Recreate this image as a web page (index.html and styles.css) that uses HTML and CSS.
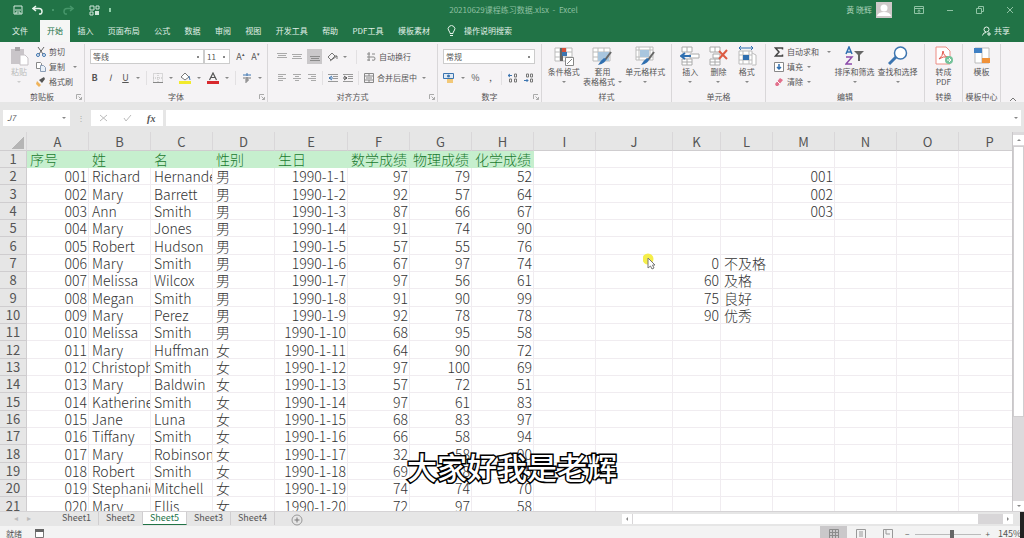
FILE: index.html
```html
<!DOCTYPE html>
<html lang="zh-CN">
  <head>
    <meta charset="utf-8">
    <title>20210629课程练习数据.xlsx - Excel</title>
    <link rel="stylesheet" href="styles.css">
  </head>
  <body>
    <header class="top">
      <div class="titlebar">
        <div class="quick">
          <button aria-label="保存"><svg width="10" height="10" viewBox="0 0 10 10"><path d="M1 1h8v8H1z" fill="none" stroke="#d5eadd"/><path d="M2 5h6M3 9V7h4v2" fill="none" stroke="#d5eadd"/></svg></button>
          <button aria-label="撤消"><svg width="11" height="10" viewBox="0 0 11 10"><path d="M4 1L1 3.500 4 6M1 3.500h6q3 0 3 3T7 9" fill="none" stroke="#e8f5ec" stroke-width="1.500"/></svg></button>
          <i class="dot"></i>
          <button class="redo" aria-label="恢复"><svg width="11" height="10" viewBox="0 0 11 10"><path d="M7 1l3 2.500L7 6M10 3.500H4q-3 0-3 3T4 9" fill="none" stroke="#46966a" stroke-width="1.500"/></svg></button>
          <button class="touch" aria-label="触摸模式"><svg width="11" height="11" viewBox="0 0 11 11"><path d="M1 1h4v4H1zM7 1h3v3H7zM1 7h3v3H1z" fill="none" stroke="#cfe6d8"/><path d="M6 6h4v4H6z" fill="#cfe6d8"/></svg></button>
          <i class="dot bright"></i>
        </div>
        <h1>20210629课程练习数据.xlsx&nbsp; -&nbsp; Excel</h1>
        <div class="account">
          <span class="user">黄 晓辉</span>
          <svg class="avatar" width="16" height="16" viewBox="0 0 16 16"><path d="M0 0h16v16H0z" fill="#cfc9c9"/><circle cx="8" cy="6" r="3.500" fill="#fff"/><path d="M1 14q1-4 7-4t7 4z" fill="#fff"/></svg>
          <button aria-label="功能区显示选项"><svg width="10" height="8" viewBox="0 0 10 8"><path d="M.5.500h9v7h-9zM.5 2.500h9M5 7V4M3.500 5.200L5 3.800l1.500 1.400" fill="none" stroke="#8fc3a4"/></svg></button>
          <button aria-label="最小化"><svg width="8" height="8" viewBox="0 0 8 8"><path d="M1 4.500h6" stroke="#8fc3a4"/></svg></button>
          <button aria-label="还原"><svg width="8" height="8" viewBox="0 0 8 8"><path d="M.5 2.500h5v5h-5zM2.500 2V.500h5v5H6" fill="none" stroke="#8fc3a4"/></svg></button>
          <button aria-label="关闭"><svg width="8" height="8" viewBox="0 0 8 8"><path d="M1 1l6 6M7 1L1 7" stroke="#8fc3a4"/></svg></button>
        </div>
      </div>
      <nav class="tabs">
        <button class="file">文件</button>
        <div class="tab-list">
          <button class="active">开始</button>
          <button>插入</button>
          <button>页面布局</button>
          <button>公式</button>
          <button>数据</button>
          <button>审阅</button>
          <button>视图</button>
          <button>开发工具</button>
          <button>帮助</button>
          <button>PDF工具</button>
          <button>模板素材</button>
        </div>
        <button class="tell"><svg width="9" height="12" viewBox="0 0 9 12"><path d="M3 8.500Q3 7 2 6a3.300 3.300 0 1 1 5 0Q6 7 6 8.500zM3 10.500h3" fill="none" stroke="#e8f5ec"/></svg>操作说明搜索</button>
        <button class="share"><svg width="9" height="10" viewBox="0 0 9 10"><circle cx="4.500" cy="3.500" r="2.500" fill="none" stroke="#e8f5ec"/><path d="M.5 9.500Q1 6.500 4 6.500M5 8h4M7 6v4" fill="none" stroke="#e8f5ec"/></svg>共享</button>
      </nav>
    </header>

    <section class="ribbon">
      <div class="group clipboard">
        <div class="body">
          <button class="big paste"><svg width="20" height="20" viewBox="0 0 20 20"><path d="M2 3h13v15H2z" fill="#c9c5c9"/><path d="M6 1h5v4H6z" fill="#aaa6aa"/><path d="M11 9h5l3 3v7h-8z" fill="#fff" stroke="#c5c1c5"/></svg><span>粘贴</span><i class="caret"></i></button>
          <div class="lines">
            <button><svg width="10" height="10" viewBox="0 0 10 10"><path d="M2 0l5 7M8 0L3 7" stroke="#666" fill="none"/><circle cx="2" cy="8" r="1.500" fill="none" stroke="#3c75b0"/><circle cx="8" cy="8" r="1.500" fill="none" stroke="#3c75b0"/></svg>剪切</button>
            <button><svg width="10" height="10" viewBox="0 0 10 10"><path d="M.5.500h4l1 1v5h-5z" fill="#fff" stroke="#888"/><path d="M4.500 3.500h3l2 2v4h-5z" fill="#e9f0f8" stroke="#8a9db5"/></svg>复制<i class="caret wide"></i></button>
            <button><svg width="10" height="10" viewBox="0 0 10 10"><path d="M1 4l4 4-2 2-3-3z" fill="#f0b35a"/><path d="M3 3l3 3 3-4-1-2z" fill="#555"/></svg>格式刷</button>
          </div>
        </div>
        <footer>剪贴板<svg class="launch" width="6" height="6" viewBox="0 0 6 6"><path d="M.5 5V.500H5M2.500 2.500l3 3M5.500 3v2.500H3" fill="none" stroke="#aaa"/></svg></footer>
      </div>

      <div class="group font">
        <div class="body rows">
          <div class="row">
            <select class="face" aria-label="字体"><option>等线</option></select>
            <select class="size" aria-label="字号"><option>11</option></select>
            <button class="letter">A<sup>▴</sup></button>
            <button class="letter">A<sup>▾</sup></button>
          </div>
          <div class="row format">
            <button class="letter"><b>B</b></button>
            <button class="letter"><em>I</em></button>
            <button class="letter"><u>U</u></button>
            <i class="caret"></i><i class="rule"></i>
            <button aria-label="边框"><svg width="10" height="10" viewBox="0 0 10 10"><path d="M.5.500h9v9h-9zM5 0v10M0 5h10" fill="none" stroke="#bbb" stroke-dasharray="1 1"/><path d="M0 9.500h10" stroke="#888"/></svg></button>
            <i class="caret"></i>
            <button aria-label="填充颜色"><svg width="12" height="12" viewBox="0 0 12 12"><path d="M2 5l4-4 4 4-4 3z" fill="#fff" stroke="#777"/><path d="M10 4l1 4" stroke="#3c75b0"/><path d="M0 9h12v3H0z" fill="#f2ea2c"/></svg></button>
            <i class="caret"></i>
            <button aria-label="字体颜色"><svg width="12" height="12" viewBox="0 0 12 12"><path d="M2.500 8L6 1l3.500 7M4 5.500h4" fill="none" stroke="#555" stroke-width="1.200"/><path d="M0 9h12v3H0z" fill="#d8282d"/></svg></button>
            <i class="caret"></i><i class="rule"></i>
            <button aria-label="拼音"><svg width="10" height="10" viewBox="0 0 10 10"><path d="M1 2h8M5 0v3" stroke="#3c75b0"/><path d="M1 5h8M5 4v5H3M3 7h4" fill="none" stroke="#777"/></svg></button>
            <i class="caret"></i>
          </div>
        </div>
        <footer>字体<svg class="launch" width="6" height="6" viewBox="0 0 6 6"><path d="M.5 5V.500H5M2.500 2.500l3 3M5.500 3v2.500H3" fill="none" stroke="#aaa"/></svg></footer>
      </div>

      <div class="group align">
        <div class="body rows">
          <div class="row">
            <button aria-label="顶端对齐"><svg width="10" height="10" viewBox="0 0 10 10"><path d="M0 1.500h10M1 3.500h8M0 5.500h10" stroke="#aaa"/></svg></button>
            <button aria-label="垂直居中"><svg width="10" height="10" viewBox="0 0 10 10"><path d="M0 2.500h10M1 4.500h8M0 6.500h10" stroke="#aaa"/></svg></button>
            <button class="pressed" aria-label="底端对齐"><svg width="10" height="10" viewBox="0 0 10 10"><path d="M0 4.500h10M1 6.500h8M0 8.500h10" stroke="#8b8b8b"/></svg></button>
            <button aria-label="方向"><svg width="11" height="10" viewBox="0 0 11 10"><path d="M1 5l4-4 3 3-4 4zM3 9l7-5M10 7V4H7" fill="none" stroke="#777"/></svg></button>
            <i class="caret"></i><i class="rule"></i>
            <button class="wrap"><svg width="10" height="10" viewBox="0 0 10 10"><path d="M1 2h3M6 2h3M1 5h7q1 0 1 2t-3 1M1 8h3M3 0v9" fill="none" stroke="#888"/></svg>自动换行</button>
          </div>
          <div class="row">
            <button aria-label="左对齐"><svg width="10" height="10" viewBox="0 0 10 10"><path d="M1 1.500h8M1 3.500h5M1 5.500h8M1 7.500h5" stroke="#aaa"/></svg></button>
            <button aria-label="居中"><svg width="10" height="10" viewBox="0 0 10 10"><path d="M1 1.500h8M3 3.500h4M1 5.500h8M3 7.500h4" stroke="#aaa"/></svg></button>
            <button aria-label="右对齐"><svg width="10" height="10" viewBox="0 0 10 10"><path d="M1 1.500h8M4 3.500h5M1 5.500h8M4 7.500h5" stroke="#aaa"/></svg></button>
            <i class="rule tight"></i>
            <button aria-label="减少缩进量"><svg width="10" height="10" viewBox="0 0 10 10"><path d="M0 1.500h10M5 3.500h5M5 5.500h5M0 8.500h10" stroke="#999"/><path d="M4 3L1 5l3 2M1 5h4" fill="none" stroke="#3c75b0"/></svg></button>
            <button aria-label="增加缩进量"><svg width="10" height="10" viewBox="0 0 10 10"><path d="M0 1.500h10M5 3.500h5M5 5.500h5M0 8.500h10" stroke="#999"/><path d="M1 3l3 2-3 2M0 5h4" fill="none" stroke="#555"/></svg></button>
            <i class="rule tight"></i>
            <button class="wrap"><svg width="10" height="10" viewBox="0 0 10 10"><path d="M.5.500h9v9h-9zM0 3h10M0 7h10M5 0v3M5 7v3M2 5h6" fill="none" stroke="#888"/></svg>合并后居中</button>
            <i class="caret"></i>
          </div>
        </div>
        <footer>对齐方式<svg class="launch" width="6" height="6" viewBox="0 0 6 6"><path d="M.5 5V.500H5M2.500 2.500l3 3M5.500 3v2.500H3" fill="none" stroke="#aaa"/></svg></footer>
      </div>

      <div class="group number">
        <div class="body rows">
          <div class="row"><select class="style" aria-label="数字格式"><option>常规</option></select></div>
          <div class="row">
            <button aria-label="会计数字格式"><svg width="12" height="10" viewBox="0 0 12 10"><path d="M.5.500h10v5H.5z" fill="#dfeaf5" stroke="#3c75b0"/><circle cx="5.500" cy="3" r="1.500" fill="#3c75b0"/><path d="M4 6h6v4H4z" fill="#f2c878"/></svg></button>
            <i class="caret"></i>
            <button class="letter">%</button>
            <button class="letter">,</button>
            <i class="rule tight"></i>
            <button aria-label="增加小数位数"><svg width="10" height="10" viewBox="0 0 10 10"><path d="M4 2.500H0M2 1L0 2.500 2 4" fill="none" stroke="#3c75b0"/><path d="M6.500 1h2v3h-2zM1.500 6h2v3h-2zM6.500 6h2v3h-2z" fill="none" stroke="#777"/></svg></button>
            <button aria-label="减少小数位数"><svg width="10" height="10" viewBox="0 0 10 10"><path d="M0 7.500h4M2.500 6L4 7.500 2.500 9" fill="none" stroke="#3c75b0"/><path d="M2.500 1h2v3h-2zM6.500 1h2v3h-2zM6.500 6h2v3h-2z" fill="none" stroke="#777"/></svg></button>
          </div>
        </div>
        <footer>数字<svg class="launch" width="6" height="6" viewBox="0 0 6 6"><path d="M.5 5V.500H5M2.500 2.500l3 3M5.500 3v2.500H3" fill="none" stroke="#aaa"/></svg></footer>
      </div>

      <div class="group styles">
        <div class="body">
          <button class="big"><svg width="20" height="20" viewBox="0 0 20 20"><path d="M1 2h17v13H1zM1 6h17M1 11h17M6 2v13M12 2v13" fill="#fff" stroke="#bbb"/><path d="M6 2h3v13H6z" fill="#666"/><path d="M8 2h4v4H8z" fill="#d8503a"/><path d="M8 6h5v4H8z" fill="#3c75b0"/><path d="M11.500 11.500h8v8h-8zM13 18l5-5" fill="#fff" stroke="#888"/></svg><span>条件格式</span><i class="caret"></i></button>
          <button class="big"><svg width="20" height="20" viewBox="0 0 20 20"><path d="M1 2h17v13H1zM1 6h17M1 11h17M6 2v13M12 2v13" fill="#fff" stroke="#bbb"/><path d="M6 6h11v9H6z" fill="#a9c6de"/><path d="M19 6l-6 8" stroke="#666" stroke-width="2"/><path d="M14 13q0 4-8 6 3-5 6-7z" fill="#2f6fb0"/></svg><span>套用<br>表格格式<i class="caret"></i></span></button>
          <button class="big"><svg width="20" height="20" viewBox="0 0 20 20"><path d="M1 1h17v13H1zM4 1v13M15 1v13M1 4h17M1 11h17" fill="#fff" stroke="#bbb"/><path d="M5 4h9v7H5z" fill="#a9c6de"/><path d="M19 6l-6 8" stroke="#666" stroke-width="2"/><path d="M14 13q0 4-8 6 3-5 6-7z" fill="#2f6fb0"/></svg><span>单元格样式</span><i class="caret"></i></button>
        </div>
        <footer>样式</footer>
      </div>

      <div class="group cells">
        <div class="body">
          <button class="big"><svg width="20" height="20" viewBox="0 0 20 20"><path d="M2 1h10v5H2zM7 1v5M2 13h10v6H2zM7 13v6M2 16h10M10 8h9v4h-9z" fill="#fff" stroke="#aaa"/><path d="M11 10H2M5 7l-4 3 4 3" fill="none" stroke="#2f6fb0" stroke-width="2"/></svg><span>插入</span><i class="caret"></i></button>
          <button class="big"><svg width="20" height="20" viewBox="0 0 20 20"><path d="M2 1h10v5H2zM7 1v5M2 13h10v6H2zM7 13v6M2 16h10M5 8h7v4H5z" fill="#fff" stroke="#aaa"/><path d="M11 5l8 8M19 4l-8 9" stroke="#dc5b43" stroke-width="2"/></svg><span>删除</span><i class="caret"></i></button>
          <button class="big"><svg width="20" height="20" viewBox="0 0 20 20"><path d="M2 5h13v13H2zM2 9h13M2 14h13M6 5v13M12 5v13M15 7l4 2v10h-4" fill="#fff" stroke="#bbb"/><path d="M6 9h6v5H6z" fill="#2f6fb0"/><path d="M2 2h14M4 0L2 2l2 2M14 0l2 2-2 2" fill="none" stroke="#2f6fb0"/></svg><span>格式</span><i class="caret"></i></button>
        </div>
        <footer>单元格</footer>
      </div>

      <div class="group edit">
        <div class="body">
          <div class="lines">
            <button><svg width="10" height="10" viewBox="0 0 10 10"><path d="M8.500 2.500V1H1.500L5 5 1.500 9h7V7.500" fill="none" stroke="#444" stroke-width="1.500"/></svg>自动求和<i class="caret wide"></i></button>
            <button><svg width="10" height="10" viewBox="0 0 10 10"><path d="M.5.500h9v9h-9z" fill="#fff" stroke="#888"/><path d="M5 2v5M3 5l2 2 2-2" fill="none" stroke="#2f6fb0" stroke-width="1.500"/></svg>填充<i class="caret"></i></button>
            <button><svg width="10" height="10" viewBox="0 0 10 10"><path d="M1 7l5-6 3 2-5 6H2z" fill="#e2708c"/><path d="M3 4l3 3" stroke="#fff"/></svg>清除<i class="caret"></i></button>
          </div>
          <button class="big"><svg width="20" height="20" viewBox="0 0 20 20"><path d="M1 8l3-7 3 7M2 6h4" fill="none" stroke="#2f6fb0" stroke-width="1.500"/><path d="M1 11h6l-6 7h6" fill="none" stroke="#8d4bab" stroke-width="1.500"/><path d="M9 5h10l-4 4v6h-2V9z" fill="#666"/></svg><span>排序和筛选</span><i class="caret"></i></button>
          <button class="big"><svg width="20" height="20" viewBox="0 0 20 20"><circle cx="12.500" cy="7" r="6" fill="#fff" stroke="#3c75b0" stroke-width="1.500"/><path d="M8 11l-7 7" stroke="#3c75b0" stroke-width="3"/></svg><span>查找和选择</span><i class="caret"></i></button>
        </div>
        <footer>编辑</footer>
      </div>

      <div class="group pdf">
        <div class="body">
          <button class="big"><svg width="20" height="20" viewBox="0 0 20 20"><path d="M2 1h10l4 4v13H2z" fill="#fff" stroke="#ec8d84"/><path d="M5 13q4-3 4-8 1 6 5 6-5-1-9 2z" fill="none" stroke="#e3564a"/><circle cx="15" cy="14" r="4" fill="#74c29a"/><path d="M13 14h4M15 12l2 2-2 2" fill="none" stroke="#fff"/></svg><span>转成<br>PDF</span></button>
        </div>
        <footer>转换</footer>
      </div>

      <div class="group template">
        <div class="body">
          <button class="big"><svg width="20" height="20" viewBox="0 0 20 20"><path d="M3 2h14v15H3zM10 2v15" fill="#fff" stroke="#bbb"/><path d="M2 2h8v5H2z" fill="#3f80c4"/><path d="M10 12h8v5h-8z" fill="#f0923a"/></svg><span>模板</span></button>
        </div>
        <footer>模板中心</footer>
      </div>
      <button class="collapse" aria-label="折叠功能区"><svg width="8" height="6" viewBox="0 0 8 6"><path d="M1 5l3-3 3 3" fill="none" stroke="#777"/></svg></button>
    </section>

    <section class="formula">
      <div class="namebox"><input type="text" value="J7" aria-label="名称框"><i class="caret"></i></div>
      <span class="grip">⋮</span>
      <div class="entry">
        <button aria-label="取消"><svg width="9" height="8" viewBox="0 0 9 8"><path d="M1 1l7 6M8 1L1 7" stroke="#bbb"/></svg></button>
        <button aria-label="输入"><svg width="9" height="8" viewBox="0 0 9 8"><path d="M1 4l2 3 5-6" fill="none" stroke="#bbb"/></svg></button>
        <button class="fx">fx</button>
      </div>
      <div class="field"><input type="text" aria-label="编辑栏"><i class="caret"></i></div>
    </section>

    <main class="sheet">
      <div class="grid">
        <table>
          <colgroup>
            <col class="w-head"><col class="w-n"><col class="w-n"><col class="w-n"><col class="w-n"><col class="w-e"><col class="w-n"><col class="w-n"><col class="w-n"><col class="w-n"><col class="w-j"><col class="w-k"><col class="w-l"><col class="w-n"><col class="w-n"><col class="w-n"><col class="w-n">
          </colgroup>
          <thead><tr id="letters"></tr></thead>
          <tbody id="cells"></tbody>
        </table>
      </div>
      <div class="vscroll">
        <button aria-label="向上"><i class="up"></i></button>
        <div class="thumb"></div>
        <button aria-label="向下"><i class="caret"></i></button>
      </div>
      <svg class="pointer" width="16" height="18" viewBox="0 0 16 18"><circle cx="5" cy="6" r="5.500" fill="#f5ee4a"/><path d="M5 5v10l2.500-2L9 16l2-1-1.500-3H12z" fill="#fff" stroke="#777"/></svg>
    </main>

    <div class="sheetbar">
      <div class="arrows"><span>◂</span><span>▸</span></div>
      <button>Sheet1</button>
      <button>Sheet2</button>
      <button class="active">Sheet5</button>
      <button>Sheet3</button>
      <button>Sheet4</button>
      <button class="add" aria-label="新工作表"><svg width="12" height="12" viewBox="0 0 12 12"><circle cx="6" cy="6" r="5" fill="none" stroke="#999"/><path d="M3.500 6h5M6 3.500v5" stroke="#777"/></svg></button>
      <div class="hscroll">
        <button aria-label="向左"><i class="left"></i></button>
        <div class="thumb"></div>
        <button aria-label="向右"><i class="right"></i></button>
      </div>
      <div class="edge"></div>
    </div>

    <footer class="status">
      <span>就绪</span>
      <svg class="macro" width="9" height="9" viewBox="0 0 9 9"><path d="M.5.500h8v8h-8z" fill="#fff" stroke="#777"/><path d="M0 0h9v3H0z" fill="#666"/></svg>
      <div class="views">
        <button class="pressed" aria-label="普通"><svg width="10" height="10" viewBox="0 0 10 10"><path d="M.5.500h9v9h-9zM0 3.500h10M0 6.500h10M3.500 0v10M6.500 0v10" fill="none" stroke="#8c8c8c"/></svg></button>
        <button aria-label="页面布局"><svg width="10" height="10" viewBox="0 0 10 10"><path d="M.5.500h9v9h-9zM3 3h4M3 5h4M3 7h4" fill="none" stroke="#999"/></svg></button>
        <button aria-label="分页预览"><svg width="10" height="10" viewBox="0 0 10 10"><path d="M.5.500h9v9h-9zM3 0v5h4" fill="none" stroke="#999"/></svg></button>
      </div>
      <div class="zoom">
        <span>−</span><input type="range" min="0" max="100" value="57" aria-label="显示比例"><span>+</span>
      </div>
      <span class="percent">145%</span>
      <div class="edge"></div>
    </footer>

    <p class="caption">大家好我是老辉</p>
    <script src="script.js"></script>
  </body>
</html>
```

FILE: styles.css
```css
* {
    box-sizing: border-box;
}

body {
    margin: 0;
    height: 100vh;
    display: flex;
    flex-direction: column;
    overflow: hidden;
    position: relative;
    background: #fff;
    color: #555;
    font-family: "Noto Sans CJK SC", sans-serif;
    font-size: 8px;
    line-height: 12px;
}

button, input, select {
    font: inherit;
    color: inherit;
    margin: 0;
    padding: 0;
    border: 0;
    background: none;
    appearance: none;
    outline: 0;
}
button {
    display: flex;
    align-items: center;
    justify-content: center;
    white-space: nowrap;
}
svg {
    flex: none;
    display: block;
}
.caret, .up, .left, .right {
    flex: none;
    display: inline-block;
    border: 2px solid transparent;
    border-top-color: #888;
    border-bottom: 0;
}
.up {
    transform: rotate(180deg);
}
.left {
    transform: rotate(90deg);
}
.right {
    transform: rotate(-90deg);
}

/* title bar and tabs */
.top {
    flex: none;
    background: #217346;
    color: #e2f1e8;
}
.titlebar {
    display: flex;
    align-items: center;
    height: 20px;
}
.quick, .account {
    flex: 1;
    display: flex;
    align-items: center;
}
.quick {
    padding-left: 13px;
    gap: 9px;
}
.dot {
    width: 2px;
    height: 2px;
    background: #46966a;
}
.dot.bright {
    height: 4px;
    background: #8ed0a8;
}
.touch {
    margin-left: 6px;
}
h1 {
    margin: 0;
    font-size: 8px;
    font-weight: normal;
    color: #8fc0a2;
}
.account {
    justify-content: flex-end;
    padding-right: 10px;
    gap: 22px;
}
.user {
    color: #a5cfb5;
    margin-right: -18px;
}
.tabs {
    display: flex;
    height: 22px;
}
.tabs button {
    padding: 0 7px;
}
.tabs .file {
    width: 40px;
}
.tab-list {
    flex: 0 0 397px;
    display: flex;
    justify-content: space-between;
}
.tabs .active {
    background: #f5f6f5;
    color: #217346;
}
.tabs .tell {
    gap: 8px;
    padding: 0 10px;
}
.tabs .share {
    gap: 3px;
    margin-left: auto;
    padding-right: 14px;
}

/* ribbon */
.ribbon {
    flex: none;
    display: flex;
    height: 60px;
    padding-top: 2px;
    background: #f5f3f5;
}
.group {
    flex: none;
    display: flex;
    flex-direction: column;
    border-right: 1px solid #d9d7d9;
}
.group .body {
    display: flex;
    height: 47px;
}
.group footer {
    position: relative;
    text-align: center;
    line-height: 11px;
}
.launch {
    position: absolute;
    right: 2px;
    top: 3px;
}
.clipboard { width: 85px; }
.font { width: 183px; }
.align { width: 170px; }
.number { width: 104px; }
.styles { width: 130px; }
.cells { width: 94px; }
.edit { width: 159px; }
.pdf { width: 38px; }
.template { width: 38px; }

.big {
    flex-direction: column;
    justify-content: flex-start;
    padding-top: 2px;
    line-height: 10px;
    text-align: center;
}
.big span {
    margin-top: 1px;
}
.big > .caret {
    margin-top: 4px;
}
.big span .caret {
    margin-left: 3px;
    margin-bottom: 2px;
}
.paste {
    width: 34px;
    margin-left: 2px;
    color: #bbb;
}
.paste .caret {
    border-top-color: #ccc;
}
.lines {
    display: flex;
    flex-direction: column;
    align-items: flex-start;
}
.lines button {
    height: 15px;
    gap: 3px;
}
.lines .caret {
    margin-left: 1px;
}
.lines .wide {
    margin-left: 5px;
}
.styles .body, .cells .body {
    justify-content: space-around;
    padding: 0 4px;
}
.edit .body {
    padding-left: 8px;
}
.edit .lines {
    width: 59px;
}
.edit .big {
    width: 43px;
}
.pdf .body, .template .body {
    justify-content: center;
}

.rows {
    flex-direction: column;
    padding: 4px 5px 0;
    gap: 4px;
}
.row {
    display: flex;
    align-items: center;
    height: 17px;
    gap: 6px;
}
.rule {
    width: 1px;
    height: 14px;
    margin: 0 4px;
    background: #e2e0e2;
}
.rule.tight {
    margin: 0;
}
.ribbon select {
    height: 15px;
    padding-left: 2px;
    border: 1px solid #ccc;
    background: #fff linear-gradient(#888, #888) no-repeat right 4px center / 2px 2px;
}
.face {
    width: 114px;
}
.size {
    width: 26px;
    margin-left: -6px;
}
.style {
    width: 92px;
}
.letter {
    font-size: 9px;
    color: #555;
    min-width: 9px;
}
.letter sup {
    font-size: 5px;
    line-height: 6px;
    align-self: flex-start;
}
.font .format {
    gap: 6px;
}
.format .letter {
    width: 10px;
}
.format .rule {
    margin: 0;
}
.align .row {
    gap: 5px;
}
.align .body {
    padding-left: 9px;
}
.pressed {
    width: 15px;
    height: 15px;
}
.pressed {
    background: #cac8ca;
}
.wrap {
    gap: 3px;
}
.collapse {
    margin: 0 auto;
    align-self: flex-end;
}

/* formula bar */
.formula {
    flex: none;
    display: flex;
    align-items: center;
    height: 30px;
    padding: 2px 3px 0;
    background: #e6e6e6;
}
.namebox, .entry, .field {
    display: flex;
    align-items: center;
    height: 16px;
    background: #fff;
}
.namebox {
    width: 67px;
    padding: 0 4px 0 2px;
}
.namebox input {
    width: 57px;
    padding-left: 2px;
    font-style: italic;
}
.grip {
    width: 21px;
    text-align: center;
    color: #aaa;
}
.entry {
    width: 72px;
    justify-content: space-around;
}
.fx {
    font: italic bold 10px "Liberation Serif", serif;
}
.field {
    flex: 1;
    margin-left: 3px;
    padding-right: 3px;
}
.field input {
    flex: 1;
}

/* worksheet */
.sheet {
    flex: 1;
    min-height: 0;
    display: flex;
    position: relative;
}
.grid {
    flex: 1;
    min-width: 0;
    overflow: hidden;
    border-right: 1px solid #c9c7c9;
}
table {
    table-layout: fixed;
    width: 1021px;
    border-spacing: 0;
    font-size: 14px;
    font-weight: 300;
    line-height: 16px;
    color: #333;
}
.w-head { width: 27px; }
.w-n { width: 62px; }
.w-e { width: 73px; }
.w-j { width: 77px; }
.w-k { width: 48px; }
.w-l { width: 52px; }

th, td {
    padding: 0 1px 0 3px;
    border: solid #f0ecf0;
    border-width: 0 1px 1px 0;
    white-space: nowrap;
    text-align: left;
    font-weight: inherit;
}
/* long names stop at the cell edge, descenders may cross the line below */
td {
    overflow-x: clip;
    overflow-y: visible;
}
th {
    padding: 0 1px;
    background: #e6e6e6;
    border-color: #cfcdcf;
    font-size: 13px;
    font-weight: 400;
    text-align: center;
    color: #555;
}
thead tr {
    height: 19px;
}
thead th {
    border-right-color: #d9d7d9;
    vertical-align: bottom;
}
thead th:first-child {
    background: linear-gradient(135deg, transparent 50%, #b5b5b5 50%) no-repeat 12px 5px / 12px 12px #e6e6e6;
}
tbody tr {
    height: 17px;
}
tbody tr:nth-child(3n) {
    height: 18px;
}
td.num {
    text-align: right;
}
td.title {
    background: #c6efce;
    border-color: #c6efce;
    color: #1a7a2e;
}
.pointer {
    position: absolute;
    left: 643px;
    top: 121px;
}
.vscroll {
    flex: none;
    display: flex;
    flex-direction: column;
    width: 11px;
    padding-top: 3px;
    background: #dcdadc;
}
.vscroll button {
    height: 10px;
    background: #fff;
}
.vscroll button:last-child {
    margin-top: auto;
}
.vscroll .thumb {
    height: 72%;
    margin-top: 1px;
    background: #fff;
    border: 1px solid #d0ced0;
}

/* sheet tabs */
.sheetbar {
    flex: none;
    display: flex;
    height: 15px;
    background: #e6e6e6;
    border-top: 1px solid #d5d3d5;
}
.arrows {
    width: 55px;
    padding-left: 14px;
    display: flex;
    gap: 9px;
    color: #bbb;
}
.sheetbar > button {
    width: 44px;
    height: 13px;
    padding-bottom: 2px;
    font-size: 9px;
    border-right: 1px solid #d0ced0;
}
.sheetbar > .active {
    background: #fff;
    color: #217346;
    border-bottom: 1px solid #217346;
    padding-bottom: 1px;
}
.sheetbar > .add {
    padding: 2px 0 0;
    border: 0;
}
.hscroll {
    flex: 0 0 391px;
    display: flex;
    margin: 2px 7px 0 auto;
    height: 10px;
    background: #d8d6d8;
}
.hscroll button {
    width: 10px;
    background: #fff;
}
.hscroll .thumb {
    flex: 1;
    margin: 0 25px 0 1px;
    background: #fff;
}
.edge {
    width: 4px;
    background: #222;
}

/* status bar */
.status {
    flex: none;
    display: flex;
    height: 12px;
    padding-left: 6px;
    overflow: hidden;
    background: #f3f3f3;
    line-height: 16px;
}
.macro {
    margin: 3px 0 0 13px;
}
.views {
    display: flex;
    margin-left: auto;
    gap: 17px;
}
.views button {
    height: 16px;
}
.views .pressed {
    width: 27px;
    margin: 0 -8px 0 0;
}
.zoom {
    display: flex;
    gap: 5px;
    margin: 0 8px 0 12px;
}
.zoom input {
    width: 66px;
    height: 16px;
    background: linear-gradient(#bbb, #bbb) no-repeat center / 100% 1px;
}
.zoom input::-webkit-slider-thumb {
    appearance: none;
    width: 4px;
    height: 9px;
    background: #666;
}
.percent {
    width: 22px;
    font-size: 9px;
}

.caption {
    position: absolute;
    left: 0;
    right: 0;
    bottom: 50px;
    margin: 0;
    text-align: center;
    font-size: 30px;
    line-height: 44px;
    font-weight: 500;
    color: #fff;
    -webkit-text-stroke: 3px #000;
    paint-order: stroke fill;
    pointer-events: none;
}
```

FILE: script.js
```js
const letters = 'ABCDEFGHIJKLMNOP';
const titles = ['序号', '姓', '名', '性别', '生日', '数学成绩', '物理成绩', '化学成绩'];
const people = [
  ['Richard', 'Hernandez', '男', 97, 79, 52],
  ['Mary', 'Barrett', '男', 92, 57, 64],
  ['Ann', 'Smith', '男', 87, 66, 67],
  ['Mary', 'Jones', '男', 91, 74, 90],
  ['Robert', 'Hudson', '男', 57, 55, 76],
  ['Mary', 'Smith', '男', 67, 97, 74],
  ['Melissa', 'Wilcox', '男', 97, 56, 61],
  ['Megan', 'Smith', '男', 91, 90, 99],
  ['Mary', 'Perez', '男', 92, 78, 78],
  ['Melissa', 'Smith', '男', 68, 95, 58],
  ['Mary', 'Huffman', '女', 64, 90, 72],
  ['Christopher', 'Smith', '女', 97, 100, 69],
  ['Mary', 'Baldwin', '女', 57, 72, 51],
  ['Katherine', 'Smith', '女', 97, 61, 83],
  ['Jane', 'Luna', '女', 68, 83, 97],
  ['Tiffany', 'Smith', '女', 66, 58, 94],
  ['Mary', 'Robinson', '女', 32, 58, 90],
  ['Robert', 'Smith', '女', 69, 78, 75],
  ['Stephanie', 'Mitchell', '女', 74, 74, 70],
  ['Mary', 'Ellis', '女', 72, 97, 58]
];
// cells outside the score list
const extra = {
  M2: '001', M3: '002', M4: '003',
  K7: '0', K8: '60', K9: '75', K10: '90',
  L7: '不及格', L8: '及格', L9: '良好', L10: '优秀'
};

function valueAt(col, row) {
  if (col > 7) return extra[letters[col] + row] || '';
  if (row === 1) return titles[col];
  const p = people[row - 2];
  return [String(row - 1).padStart(3, '0'), p[0], p[1], p[2], '1990-1-' + (row - 1), p[3], p[4], p[5]][col];
}

document.getElementById('letters').innerHTML =
  '<th></th>' + [...letters].map(l => `<th>${l}</th>`).join('');

let html = '';
for (let row = 1; row <= 21; row++) {
  html += `<tr><th>${row}</th>`;
  for (let col = 0; col < letters.length; col++) {
    const value = String(valueAt(col, row));
    const name = row === 1 && col < 8 ? 'title' : /^\d/.test(value) ? 'num' : '';
    html += `<td class="${name}">${value}</td>`;
  }
  html += '</tr>';
}
document.getElementById('cells').innerHTML = html;
```
